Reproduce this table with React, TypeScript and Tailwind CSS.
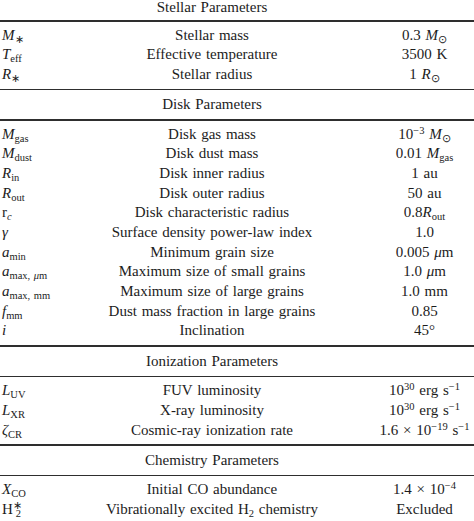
import type { ReactNode } from "react";

const Sub = ({ children }: { children: ReactNode }) => (
  <span className="align-[-0.32em] text-[0.7em] leading-none not-italic">{children}</span>
);
const Sup = ({ children }: { children: ReactNode }) => (
  <span className="align-[0.45em] text-[0.7em] leading-none not-italic">{children}</span>
);
const I = ({ children }: { children: ReactNode }) => <i className="italic">{children}</i>;

type Row = { sym: ReactNode; desc: ReactNode; value: ReactNode };

const sections: { title: string; rows: Row[] }[] = [
  {
    title: "Stellar Parameters",
    rows: [
      { sym: <><I>M</I><Sub>∗</Sub></>, desc: "Stellar mass", value: <>0.3 <I>M</I><Sub>⊙</Sub></> },
      { sym: <><I>T</I><Sub>eff</Sub></>, desc: "Effective temperature", value: "3500 K" },
      { sym: <><I>R</I><Sub>∗</Sub></>, desc: "Stellar radius", value: <>1 <I>R</I><Sub>⊙</Sub></> },
    ],
  },
  {
    title: "Disk Parameters",
    rows: [
      { sym: <><I>M</I><Sub>gas</Sub></>, desc: "Disk gas mass", value: <>10<Sup>−3</Sup> <I>M</I><Sub>⊙</Sub></> },
      { sym: <><I>M</I><Sub>dust</Sub></>, desc: "Disk dust mass", value: <>0.01 <I>M</I><Sub>gas</Sub></> },
      { sym: <><I>R</I><Sub>in</Sub></>, desc: "Disk inner radius", value: "1 au" },
      { sym: <><I>R</I><Sub>out</Sub></>, desc: "Disk outer radius", value: "50 au" },
      { sym: <>r<Sub><I>c</I></Sub></>, desc: "Disk characteristic radius", value: <>0.8<I>R</I><Sub>out</Sub></> },
      { sym: <I>γ</I>, desc: "Surface density power-law index", value: "1.0" },
      { sym: <><I>a</I><Sub>min</Sub></>, desc: "Minimum grain size", value: <>0.005 <I>μ</I>m</> },
      { sym: <><I>a</I><Sub>max, <I>μ</I>m</Sub></>, desc: "Maximum size of small grains", value: <>1.0 <I>μ</I>m</> },
      { sym: <><I>a</I><Sub>max, mm</Sub></>, desc: "Maximum size of large grains", value: "1.0 mm" },
      { sym: <><I>f</I><Sub>mm</Sub></>, desc: "Dust mass fraction in large grains", value: "0.85" },
      { sym: <I>i</I>, desc: "Inclination", value: "45°" },
    ],
  },
  {
    title: "Ionization Parameters",
    rows: [
      { sym: <><I>L</I><Sub>UV</Sub></>, desc: "FUV luminosity", value: <>10<Sup>30</Sup> erg s<Sup>−1</Sup></> },
      { sym: <><I>L</I><Sub>XR</Sub></>, desc: "X-ray luminosity", value: <>10<Sup>30</Sup> erg s<Sup>−1</Sup></> },
      { sym: <><I>ζ</I><Sub>CR</Sub></>, desc: "Cosmic-ray ionization rate", value: <>1.6 × 10<Sup>−19</Sup> s<Sup>−1</Sup></> },
    ],
  },
  {
    title: "Chemistry Parameters",
    rows: [
      { sym: <><I>X</I><Sub>CO</Sub></>, desc: "Initial CO abundance", value: <>1.4 × 10<Sup>−4</Sup></> },
      {
        sym: (
          <>
            H<Sup>∗</Sup>
            <span className="-ml-[6px]">
              <Sub>2</Sub>
            </span>
          </>
        ),
        desc: <>Vibrationally excited H<Sub>2</Sub> chemistry</>,
        value: "Excluded",
      },
    ],
  },
];

const Rule = () => <div className="h-[1.5px] w-full bg-[#2e2e2e]" />;

export default function App() {
  return (
    <div className="w-[474px] overflow-hidden bg-white font-['Liberation_Serif','Times_New_Roman',serif] text-[15px] text-[#1c1c1c] [word-spacing:1px]">
      <div className="w-[525px]">
        {sections.map((s, si) => (
          <div key={s.title}>
            <div
              className={
                si === 0
                  ? "grid h-[20px] grid-cols-[100px_224px_201px] items-start leading-[15px]"
                  : "grid h-[29px] grid-cols-[100px_224px_201px] items-center leading-[15px]"
              }
            >
              <span className="col-start-2 whitespace-nowrap text-center">{s.title}</span>
            </div>
            <Rule />
            <div className="py-[4px]">
              {s.rows.map((r, ri) => (
                <div key={ri} className="grid h-[19.7px] grid-cols-[100px_224px_201px] items-center leading-[19.7px] whitespace-nowrap">
                  <span className="pl-[2px]">{r.sym}</span>
                  <span className="text-center">{r.desc}</span>
                  <span className="text-center">{r.value}</span>
                </div>
              ))}
            </div>
            {si < sections.length - 1 && <Rule />}
          </div>
        ))}
      </div>
    </div>
  );
}
